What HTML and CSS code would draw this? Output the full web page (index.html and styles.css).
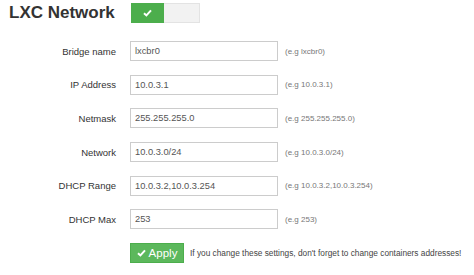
FILE: index.html
```html
<!DOCTYPE html>
<html lang="en">
<head>
  <meta charset="UTF-8" />
  <title>LXC Network</title>
  <link rel="stylesheet" href="styles.css">
</head>
<body>
  <div class="header">
    <h2>LXC Network</h2>
    <div class="toggle">
      <span class="toggleOn">
        <svg width="9" height="8" viewBox="0 0 9 8"><path d="M1 4.2 L3.4 6.4 L8 1.4" fill="none" stroke="#fff" stroke-width="2"/></svg>
      </span>
      <span class="toggleOff"></span>
    </div>
  </div>

  <form class="netForm">
    <label>Bridge name</label>
    <input type="text" value="lxcbr0" />
    <span class="help">(e.g lxcbr0)</span>

    <label>IP Address</label>
    <input type="text" value="10.0.3.1" />
    <span class="help">(e.g 10.0.3.1)</span>

    <label>Netmask</label>
    <input type="text" value="255.255.255.0" />
    <span class="help">(e.g 255.255.255.0)</span>

    <label>Network</label>
    <input type="text" value="10.0.3.0/24" />
    <span class="help">(e.g 10.0.3.0/24)</span>

    <label>DHCP Range</label>
    <input type="text" value="10.0.3.2,10.0.3.254" />
    <span class="help">(e.g 10.0.3.2,10.0.3.254)</span>

    <label>DHCP Max</label>
    <input type="text" value="253" />
    <span class="help">(e.g 253)</span>

    <div class="applyRow">
      <button type="button" class="btn">
        <svg width="9" height="8" viewBox="0 0 9 8"><path d="M1 4.2 L3.4 6.4 L8 1.4" fill="none" stroke="#fff" stroke-width="2"/></svg>
        Apply
      </button>
      <span class="warn">If you change these settings, don't forget to change containers addresses!</span>
    </div>
  </form>
</body>
</html>
```

FILE: styles.css
```css
body {
  margin: 0;
  font-family: "Liberation Sans", Arial, sans-serif;
  color: #333;
  background: #fff;
}
.header {
  display: flex;
  align-items: center;
  padding: 3px 0 0 9px;
  height: 20px;
}
.header h2 {
  margin: 0;
  font-size: 17px;
  font-weight: bold;
  width: 122px;
}
.toggle {
  display: flex;
  height: 20px;
}
.toggleOn {
  width: 33px;
  background: #4cae4c;
  display: flex;
  align-items: center;
  justify-content: center;
}
.toggleOff {
  width: 36px;
  background: #f2f2f2;
  border: 1px solid #e3e3e3;
  border-left: none;
  box-sizing: border-box;
}
.netForm {
  display: grid;
  grid-template-columns: 130px 148px auto;
  row-gap: 13.7px;
  align-items: center;
  margin-top: 18px;
}
.netForm label {
  text-align: right;
  font-size: 9.5px;
  margin-right: 14px;
}
.netForm input {
  height: 20px;
  box-sizing: border-box;
  border: 1px solid #ccc;
  padding: 0 4px;
  font-family: inherit;
  font-size: 9.3px;
  color: #555;
  width: 148px;
  margin: 0;
}
.help {
  font-size: 8px;
  color: #777;
  margin-left: 7px;
}
.applyRow {
  grid-column: 2 / 4;
  display: flex;
  align-items: center;
  gap: 6px;
  white-space: nowrap;
}
.btn {
  height: 20px;
  width: 54px;
  padding: 0;
  background: #5cb85c;
  color: #fff;
  border: 1px solid #4cae4c;
  font-family: inherit;
  font-size: 11.5px;
  display: flex;
  align-items: center;
  justify-content: center;
  gap: 3px;
}
.warn {
  font-size: 8.3px;
  color: #444;
}
```
